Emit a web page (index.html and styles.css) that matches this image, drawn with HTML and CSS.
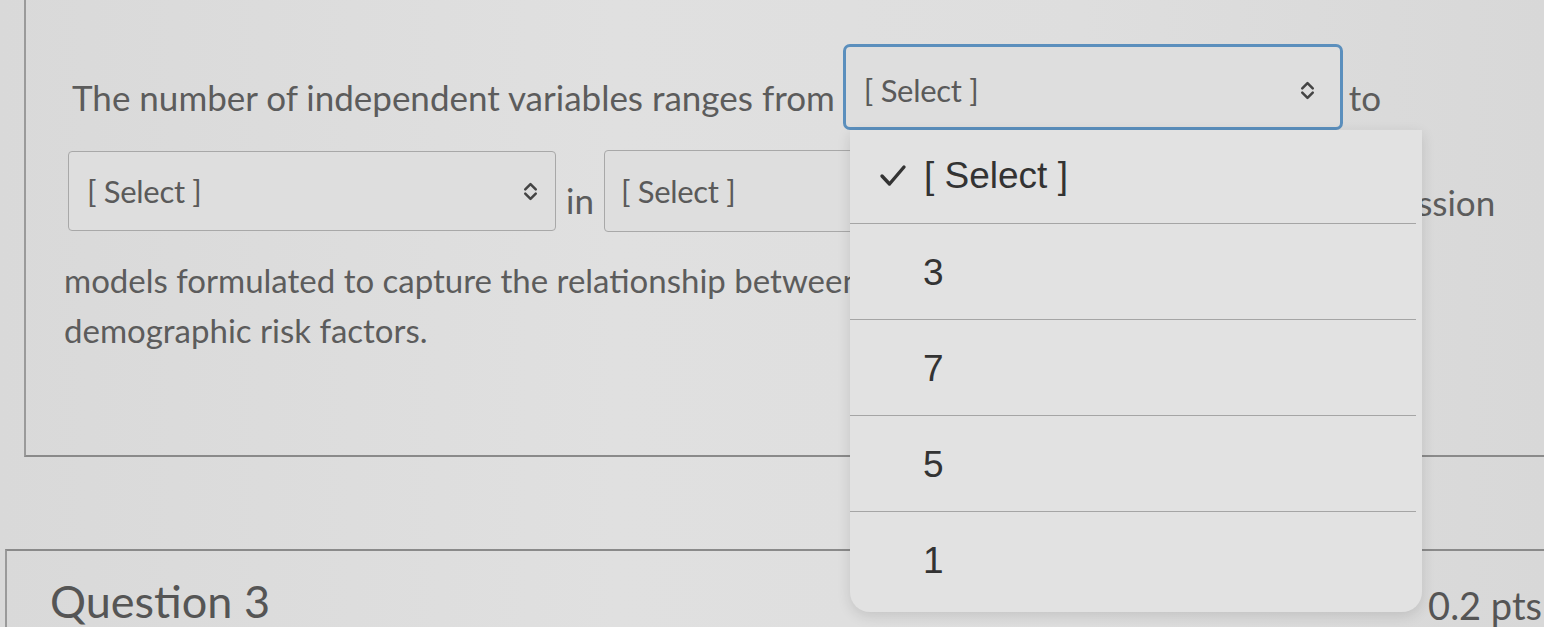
FILE: index.html
```html
<!DOCTYPE html>
<html>
<head>
<meta charset="utf-8">
<link rel="stylesheet" href="styles.css">
</head>
<body>
<div class="page">
  <section class="card card-q2">
    <div class="row row1">
      <span class="txt">The number of independent variables ranges from</span>
      <div class="select select-focus">
        <span class="sel-label">[ Select ]</span>
        <svg class="chev" viewBox="0 0 16 20" width="17" height="21"><path d="M3 8 L8 3 L13 8 M3 12 L8 17 L13 12" fill="none" stroke="#444" stroke-width="2.4" stroke-linecap="round" stroke-linejoin="round"/></svg>
      </div>
      <span class="txt txt-to">to</span>
    </div>
    <div class="row row2">
      <div class="select select-a">
        <span class="sel-label">[ Select ]</span>
        <svg class="chev" viewBox="0 0 16 20" width="17" height="21"><path d="M3 8 L8 3 L13 8 M3 12 L8 17 L13 12" fill="none" stroke="#444" stroke-width="2.4" stroke-linecap="round" stroke-linejoin="round"/></svg>
      </div>
      <span class="txt txt-in">in</span>
      <div class="select select-b">
        <span class="sel-label">[ Select ]</span>
      </div>
      <span class="txt txt-reg">regression</span>
    </div>
    <p class="para">models formulated to capture the relationship between health<br>demographic risk factors.</p>
  </section>

  <section class="card card-q3">
    <h2 class="q-title">Question 3</h2>
    <span class="pts">0.2 pts</span>
  </section>

  <ul class="dropdown">
    <li class="opt opt-sel">
      <svg class="check" viewBox="0 0 30 26" width="30" height="26"><path d="M4 13 L11.5 21 L26 4" fill="none" stroke="#333" stroke-width="3.4" stroke-linecap="round" stroke-linejoin="round"/></svg>
      <span>[ Select ]</span>
    </li>
    <li class="opt"><span class="num">3</span></li>
    <li class="opt"><span class="num">7</span></li>
    <li class="opt"><span class="num">5</span></li>
    <li class="opt last"><span class="num">1</span></li>
  </ul>
</div>
</body>
</html>
```

FILE: styles.css
```css
* { box-sizing: border-box; }
html, body { margin: 0; padding: 0; }
body {
  background: #dcdcdc;
  font-family: Lato, "Open Sans", sans-serif;
  color: #555;
  width: 1544px;
  height: 627px;
  overflow: hidden;
}
.page {
  position: relative;
  width: 1544px;
  height: 627px;
  overflow: hidden;
  background: linear-gradient(90deg, #d9d9d9 0%, #e0e0e0 40%, #dedede 70%, #d8d8d8 100%);
}
.card-q2 {
  margin-left: 24px;
  height: 457px;
  border-left: 2px solid #9a9a9a;
  border-bottom: 2px solid #8a8a8a;
  padding-top: 44px;
  padding-left: 42px;
}
.row {
  display: flex;
  align-items: flex-end;
}
.txt {
  font-size: 35px;
  line-height: 42px;
  color: #5c5c5c;
  white-space: nowrap;
}
.row1 { padding-left: 4px; height: 86px; }
.row1 > .txt { padding-bottom: 12px; }
.select {
  display: flex;
  align-items: center;
  justify-content: space-between;
  border: 1px solid #a8a8a8;
  border-radius: 4px;
  background: #dedede;
  color: #5a5a5a;
}
.sel-label {
  font-size: 31px;
  letter-spacing: -0.3px;
}
.select-focus {
  width: 500px;
  height: 86px;
  margin-left: 8px;
  margin-right: 6px;
  border: 3px solid #5b8fbd;
  border-radius: 7px;
  padding: 0 24px 0 18px;
  align-items: flex-start;
  padding-top: 24px;
}
.select-focus .chev { margin-top: 9px; }
.txt-to { padding-bottom: 10px; }
.row2 {
  margin-top: 20px;
  height: 82px;
  align-items: center;
}
.select-a {
  width: 488px;
  height: 80px;
  padding: 0 16px 0 18px;
}
.txt-in { margin: 18px 10px 0 10px; }
.select-b {
  width: 716px;
  height: 82px;
  padding: 0 16px;
}
.txt-reg { margin: 22px 0 0 18px; }
.para {
  margin: 23px 0 0 -4px;
  font-size: 33px;
  line-height: 50px;
  color: #5c5c5c;
}
.card-q3 {
  position: relative;
  margin-top: 92px;
  margin-left: 5px;
  height: 90px;
  border-top: 2px solid #8a8a8a;
  border-left: 2px solid #9a9a9a;
}
.q-title {
  margin: 0;
  padding: 24px 0 0 43px;
  font-size: 45px;
  font-weight: 400;
  color: #555;
  line-height: 52px;
}
.pts {
  position: absolute;
  right: 2px;
  top: 32px;
  font-size: 38px;
  line-height: 44px;
  color: #555;
}
.dropdown {
  position: absolute;
  left: 850px;
  top: 130px;
  width: 572px;
  height: 482px;
  margin: 0;
  padding: 0;
  list-style: none;
  background: #e2e2e2;
  border-radius: 0 0 20px 20px;
  box-shadow: 0 4px 14px rgba(0,0,0,0.12);
  font-family: "Liberation Sans", Arial, sans-serif;
  color: #333;
}
.opt {
  display: flex;
  align-items: center;
  height: 96px;
  border-bottom: 1.5px solid #a5a5a5;
  padding-left: 73px;
  font-size: 37px;
  margin-right: 6px;
}
.opt-sel {
  height: 94px;
  padding-left: 28px;
  padding-bottom: 2px;
}
.check { margin-right: 16px; }
.num { font-size: 37px; padding-top: 2px; }
.last { border-bottom: none; }
```
